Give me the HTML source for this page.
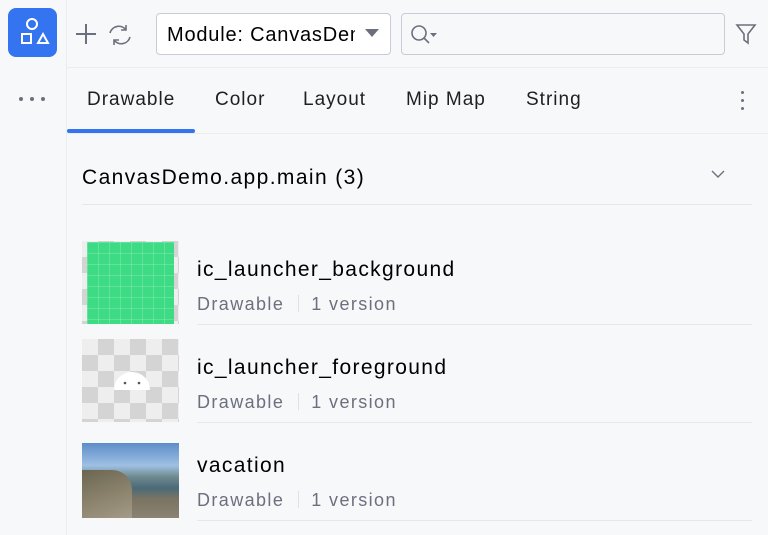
<!DOCTYPE html>
<html><head><style>
body{margin:0;width:768px;height:535px;background:#f7f8fa;font-family:"Liberation Sans",sans-serif;position:relative;overflow:hidden;color:#000}
.a{position:absolute}
.tab{position:absolute;top:89px;font-size:19px;color:#1e1f22;letter-spacing:1px}
.t{position:absolute;left:197px;font-size:21px;color:#000;letter-spacing:1.35px}
.s{position:absolute;left:197px;font-size:18px;color:#6c707e;letter-spacing:1.4px}
.s span{display:inline-block;width:1px;height:17px;background:#dfe1e5;margin:0 12px 0 14px;vertical-align:-2px}
.dv{position:absolute;left:197px;width:555px;height:1px;background:#e6e7ea}
.chk{background-color:#eee;background-image:linear-gradient(45deg,#d4d4d4 25%,transparent 25%,transparent 75%,#d4d4d4 75%),linear-gradient(45deg,#d4d4d4 25%,transparent 25%,transparent 75%,#d4d4d4 75%);background-size:32px 32px;background-position:0 0,16px 16px}
</style></head><body>
<div class="a" style="left:66px;top:0;width:1px;height:535px;background:#ebecf0"></div>
<div class="a" style="left:8px;top:8px;width:49px;height:49px;border-radius:8px;background:#3574f0"></div>
<svg class="a" style="left:8px;top:8px" width="49" height="49" fill="none" stroke="#fff" stroke-width="2"><circle cx="24" cy="16" r="5"/><rect x="14" y="26" width="9" height="9"/><path d="M30 35 L35 26 L40 35Z"/></svg>
<svg class="a" style="left:18px;top:95px" width="30" height="8" fill="#6c707e"><circle cx="3" cy="4" r="2"/><circle cx="14" cy="4" r="2"/><circle cx="25" cy="4" r="2"/></svg>
<div class="a" style="left:67px;top:67px;width:701px;height:1px;background:#ebecf0"></div>
<svg class="a" style="left:72px;top:22px" width="66" height="26" fill="none" stroke="#6c707e" stroke-width="2"><path d="M4 12H24M14 2V22"/><path d="M38 11a9 9 0 0 1 16-3M58 15a9 9 0 0 1-16 3M54 3v5h-5M42 23v-5h5" stroke-width="1.6"/></svg>
<div class="a" style="left:156px;top:13px;width:233px;height:40px;border:1px solid #c9ccd6;border-radius:4px;background:#fff"></div>
<div class="a" style="left:167px;top:24px;font-size:20px;width:188px;overflow:hidden;white-space:nowrap;letter-spacing:0.8px">Module: CanvasDemo</div>
<svg class="a" style="left:365px;top:29px" width="14" height="9"><path d="M0 0H14L7 8Z" fill="#6c707e"/></svg>
<div class="a" style="left:401px;top:13px;width:322px;height:40px;border:1px solid #c9ccd6;border-radius:4px;background:#f7f8fa"></div>
<svg class="a" style="left:410px;top:24px" width="32" height="22" fill="none" stroke="#6c707e" stroke-width="1.6"><circle cx="9" cy="9" r="7"/><path d="M14 14L19 19"/><path d="M20 9H27L23.5 13Z" fill="#6c707e" stroke="none"/></svg>
<svg class="a" style="left:735px;top:23px" width="22" height="22" fill="none" stroke="#6c707e" stroke-width="1.6"><path d="M2 2H20L13 11V20L9 17V11Z"/></svg>
<div class="tab" style="left:87px">Drawable</div>
<div class="tab" style="left:215px">Color</div>
<div class="tab" style="left:303px">Layout</div>
<div class="tab" style="left:406px">Mip Map</div>
<div class="tab" style="left:526px">String</div>
<div class="a" style="left:741px;top:91px;width:3px;height:3px;border-radius:2px;background:#6c707e;box-shadow:0 8px #6c707e,0 16px #6c707e"></div>
<div class="a" style="left:67px;top:129px;width:128px;height:4px;border-radius:2px;background:#3574f0"></div>
<div class="a" style="left:67px;top:133px;width:701px;height:1px;background:#ebecf0"></div>
<div class="a" style="left:82px;top:166px;font-size:21px;letter-spacing:1.4px">CanvasDemo.app.main (3)</div>
<svg class="a" style="left:711px;top:170px" width="14" height="9" fill="none" stroke="#6c707e" stroke-width="1.4"><path d="M1 1L7 7L13 1"/></svg>
<div class="a" style="left:82px;top:204px;width:670px;height:1px;background:#e6e7ea"></div>

<div class="a chk" style="left:82px;top:241px;width:97px;height:83px"></div>
<div class="a" style="left:87px;top:242px;width:87px;height:82px;background:#3ddc84;background-image:linear-gradient(90deg,rgba(255,255,255,.18) 1px,transparent 1px),linear-gradient(rgba(255,255,255,.18) 1px,transparent 1px);background-size:11px 11px"></div>
<div class="t" style="top:258px">ic_launcher_background</div>
<div class="s" style="top:294px">Drawable<span></span>1 version</div>
<div class="dv" style="top:324px"></div>

<div class="a chk" style="left:82px;top:339px;width:97px;height:83px"></div>
<svg class="a" style="left:112px;top:368px" width="40" height="24"><path d="M2 22A18 18 0 0 1 38 22Z" fill="#fff"/><circle cx="13" cy="15" r="1.3" fill="#555"/><circle cx="27" cy="15" r="1.3" fill="#555"/></svg>
<div class="t" style="top:356px">ic_launcher_foreground</div>
<div class="s" style="top:392px">Drawable<span></span>1 version</div>
<div class="dv" style="top:422px"></div>

<div class="a" style="left:82px;top:443px;width:97px;height:75px;background:linear-gradient(180deg,#5d8dc9 0%,#9fc0e3 30%,#6f8a8f 45%,#4a6a78 60%,#7c7462 75%,#8a8272 100%)"></div>
<div class="a" style="left:82px;top:470px;width:50px;height:48px;background:linear-gradient(160deg,#6b6650,#8f8670 60%,#a39a88);border-top-right-radius:20px"></div>
<div class="t" style="top:454px">vacation</div>
<div class="s" style="top:490px">Drawable<span></span>1 version</div>
<div class="dv" style="top:520px"></div>
</body></html>
